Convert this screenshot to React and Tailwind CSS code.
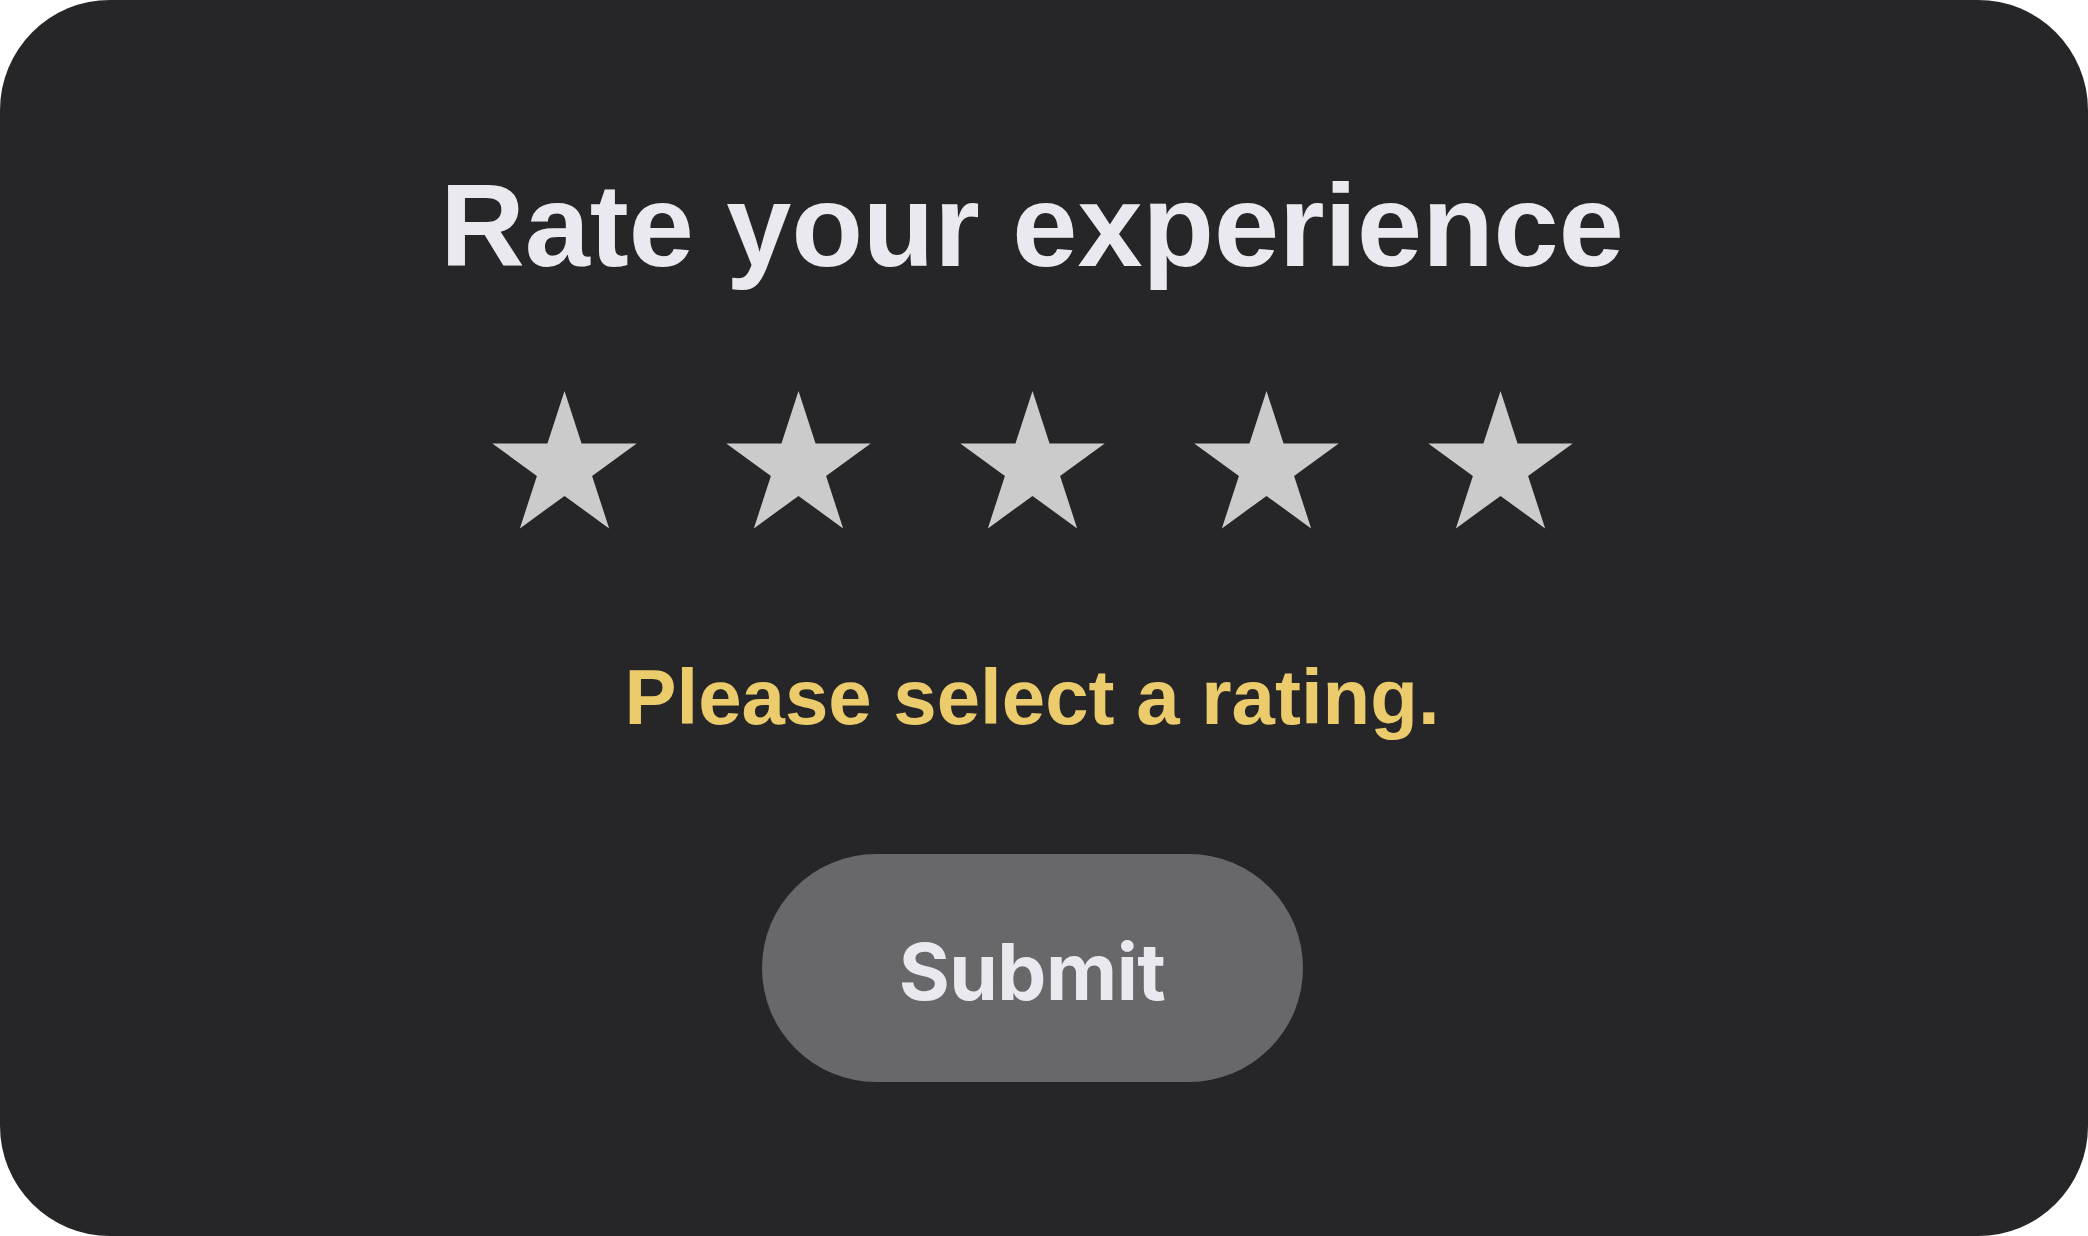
import React from "react";

function Star() {
  return (
    <svg
      width="145"
      height="137.5"
      viewBox="-72.4 -76 144.8 137.6"
      className="block shrink-0"
      aria-hidden="true"
    >
      <polygon
        fill="#cbcbcb"
        points="0,-76 17.06,-23.49 72.28,-23.49 27.61,8.97 44.67,61.48 0,29.03 -44.67,61.48 -27.61,8.97 -72.28,-23.49 -17.06,-23.49"
      />
    </svg>
  );
}

export default function App() {
  return (
    <div className="w-[2088px] h-[1236px] bg-white">
      <div className="w-full h-full rounded-[110px] bg-[#262628] pr-[24px] flex flex-col items-center">
        <h1 className="mt-[167px] text-[117px] leading-none font-bold text-[#eae9ef] whitespace-nowrap font-['Liberation_Sans',Arial,sans-serif]">
          Rate your experience
        </h1>
        <div className="mt-[107px] flex items-center gap-[89px]">
          <Star />
          <Star />
          <Star />
          <Star />
          <Star />
        </div>
        <p className="mt-[129px] text-[78px] leading-none font-bold text-[#ebcb6b] whitespace-nowrap font-['Liberation_Sans',Arial,sans-serif]">
          Please select a rating.
        </p>
        <button className="mt-[118px] w-[541px] h-[228px] rounded-full bg-[#68686b] flex items-center justify-center pt-[8px]">
          <span className="text-[78px] leading-none font-bold tracking-[-0.5px] text-[#eae9ef] font-['Inter',sans-serif]">
            Submit
          </span>
        </button>
      </div>
    </div>
  );
}
